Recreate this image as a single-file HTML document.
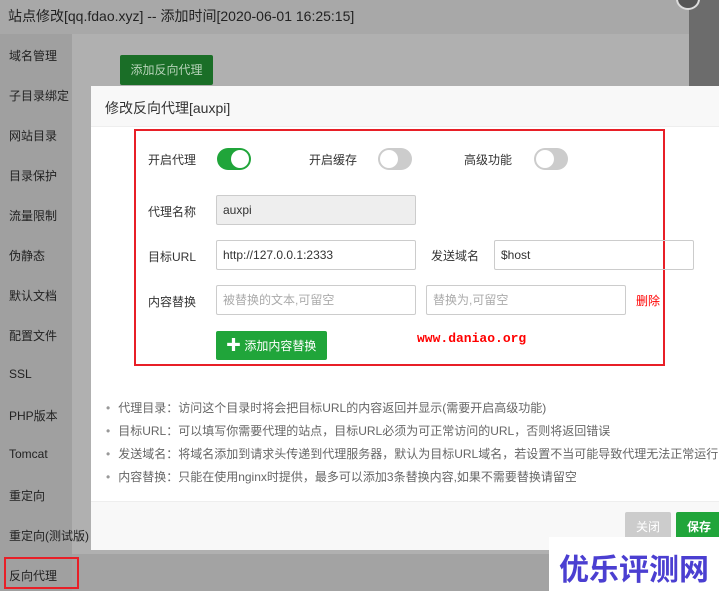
<!DOCTYPE html>
<html><head><meta charset="utf-8"><style>
*{margin:0;padding:0;box-sizing:border-box}
body{width:719px;height:591px;overflow:hidden;background:#a3a3a3;font-family:"Liberation Sans","Noto Sans CJK SC",sans-serif;position:relative;color:#333}
.top{position:absolute;left:0;top:0;width:689px;height:34px;background:#a8a8a8;font-size:14px;color:#222;padding:6px 0 0 8px}
.side{position:absolute;left:0;top:34px;width:72px;height:557px;background:#a0a0a0}
.content{position:absolute;left:72px;top:34px;width:617px;height:520px;background:#b0b0b0}
.rightstrip{position:absolute;left:689px;top:0;width:30px;height:591px;background:#6c6c6c}
.si{position:absolute;left:9px;font-size:12px;color:#222}
.addbtn{position:absolute;left:120px;top:55px;width:93px;height:30px;background:#1a6e27;color:#b7d3b9;font-size:12px;line-height:30px;text-align:center;border-radius:2px}
.dlg{position:absolute;left:91px;top:86px;width:628px;height:464px;background:#fff}
.dh{height:41px;background:#f8f8f8;border-bottom:1px solid #eee;font-size:14px;color:#333;padding:12px 0 0 14px}
.red{position:absolute;left:43px;top:43px;width:531px;height:237px;border:2px solid #e81f27}
.lb{position:absolute;font-size:12px;color:#333}
.sw{position:absolute;width:34px;height:22px;border-radius:11px;background:#ccc}
.sw i{position:absolute;top:2px;width:18px;height:18px;border-radius:50%;background:#fff}
.in{position:absolute;height:30px;border:1px solid #ccc;border-radius:2px;font-size:12px;padding-left:6px;line-height:28px;color:#333}
.ph{color:#aaa}
.tips{position:absolute;left:15px;top:311px;font-size:12px;color:#666;line-height:23px}
.tips div::before{content:"•";color:#999;margin-right:8px}
.foot{position:absolute;left:0;top:415px;width:628px;height:49px;background:#f8f8f8;border-top:1px solid #eee}
.b{position:absolute;top:10px;height:30px;line-height:30px;font-size:12px;color:#fff;text-align:center;border-radius:2px}
.wm{position:absolute;left:549px;top:537px;width:170px;height:54px;overflow:hidden;white-space:nowrap;background:#fff;color:#4b3fd1;font-size:30px;font-weight:bold;padding:8px 0 0 10px}
</style></head><body>
<div class="top">站点修改[qq.fdao.xyz] -- 添加时间[2020-06-01 16:25:15]</div>
<div class="side"></div>
<div class="content"></div>
<div class="rightstrip"></div>
<div style="position:absolute;left:676px;top:-12px;width:24px;height:22px;border-radius:50%;background:#555;border:2px solid #ddd"></div>
<div class="si" style="top:47px">域名管理</div>
<div class="si" style="top:87px">子目录绑定</div>
<div class="si" style="top:127px">网站目录</div>
<div class="si" style="top:167px">目录保护</div>
<div class="si" style="top:207px">流量限制</div>
<div class="si" style="top:247px">伪静态</div>
<div class="si" style="top:287px">默认文档</div>
<div class="si" style="top:327px">配置文件</div>
<div class="si" style="top:367px">SSL</div>
<div class="si" style="top:407px">PHP版本</div>
<div class="si" style="top:447px">Tomcat</div>
<div class="si" style="top:487px">重定向</div>
<div class="si" style="top:527px">重定向(测试版)</div>
<div class="si" style="top:567px">反向代理</div>
<div style="position:absolute;left:4px;top:557px;width:75px;height:32px;border:2px solid #e81f27"></div>
<div class="addbtn">添加反向代理</div>
<div class="dlg">
<div class="dh">修改反向代理[auxpi]</div>
<div class="red"></div>
<div class="lb" style="left:57px;top:65px">开启代理</div>
<div class="sw" style="left:126px;top:62px;background:#20a53a"><i style="left:14px"></i></div>
<div class="lb" style="left:218px;top:65px">开启缓存</div>
<div class="sw" style="left:287px;top:62px"><i style="left:2px"></i></div>
<div class="lb" style="left:373px;top:65px">高级功能</div>
<div class="sw" style="left:443px;top:62px"><i style="left:2px"></i></div>
<div class="lb" style="left:57px;top:117px">代理名称</div>
<div class="in" style="left:125px;top:109px;width:200px;background:#eee">auxpi</div>
<div class="lb" style="left:57px;top:162px">目标URL</div>
<div class="in" style="left:125px;top:154px;width:200px">http://127.0.0.1:2333</div>
<div class="lb" style="left:340px;top:161px">发送域名</div>
<div class="in" style="left:403px;top:154px;width:200px">$host</div>
<div class="lb" style="left:57px;top:207px">内容替换</div>
<div class="in ph" style="left:125px;top:199px;width:200px">被替换的文本,可留空</div>
<div class="in ph" style="left:335px;top:199px;width:200px">替换为,可留空</div>
<div class="lb" style="left:545px;top:206px;color:#f00">删除</div>
<div style="position:absolute;left:125px;top:245px;width:111px;height:29px;background:#20a53a;border-radius:2px;color:#fff;font-size:12px;line-height:29px;padding-left:10px"><b style="font-size:15px">✚</b> 添加内容替换</div>
<div style="position:absolute;left:326px;top:245px;color:#f00;font-family:'Liberation Mono',monospace;font-weight:bold;font-size:13px">www.daniao.org</div>
<div class="tips">
<div>代理目录：访问这个目录时将会把目标URL的内容返回并显示(需要开启高级功能)</div>
<div>目标URL：可以填写你需要代理的站点，目标URL必须为可正常访问的URL，否则将返回错误</div>
<div style="white-space:nowrap">发送域名：将域名添加到请求头传递到代理服务器，默认为目标URL域名，若设置不当可能导致代理无法正常运行</div>
<div>内容替换：只能在使用nginx时提供，最多可以添加3条替换内容,如果不需要替换请留空</div>
</div>
<div class="foot">
<div class="b" style="left:534px;width:46px;background:#ccc">关闭</div>
<div class="b" style="left:585px;width:46px;background:#20a53a;font-weight:bold">保存</div>
</div>
</div>
<div class="wm">优乐评测网</div>
</body></html>
